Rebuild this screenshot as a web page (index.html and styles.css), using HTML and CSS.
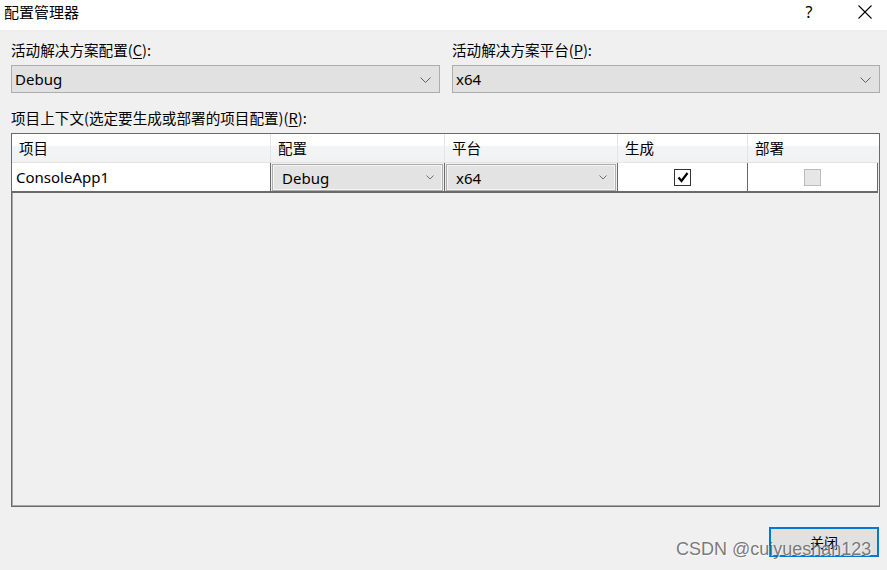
FILE: index.html
```html
<!DOCTYPE html>
<html lang="zh-CN">
<head>
<meta charset="utf-8">
<title>配置管理器</title>
<link rel="stylesheet" href="styles.css">
</head>
<body>
<div class="window">
  <div class="titlebar">
    <span class="title">配置管理器</span>
    <div class="tb-buttons">
      <span class="help">?</span>
      <span class="close">
        <svg width="14" height="14" viewBox="0 0 14 14"><path d="M0.5 0.5 L13.5 13.5 M13.5 0.5 L0.5 13.5" stroke="#000" stroke-width="1.1" fill="none"/></svg>
      </span>
    </div>
  </div>
  <div class="content">
    <div class="top-row">
      <div class="field">
        <div class="label">活动解决方案配置(<u>C</u>):</div>
        <div class="combo">
          <span class="combo-text">Debug</span>
          <svg class="chev" width="11" height="6" viewBox="0 0 11 6"><path d="M0.5 0.5 L5.5 5.5 L10.5 0.5" stroke="#606060" stroke-width="1" fill="none"/></svg>
        </div>
      </div>
      <div class="field">
        <div class="label">活动解决方案平台(<u>P</u>):</div>
        <div class="combo">
          <span class="combo-text">x64</span>
          <svg class="chev" width="11" height="6" viewBox="0 0 11 6"><path d="M0.5 0.5 L5.5 5.5 L10.5 0.5" stroke="#606060" stroke-width="1" fill="none"/></svg>
        </div>
      </div>
    </div>
    <div class="label grid-label">项目上下文(选定要生成或部署的项目配置)(<u>R</u>):</div>
    <div class="grid">
      <div class="grid-head">
        <div class="hcell">项目</div>
        <div class="hcell">配置</div>
        <div class="hcell">平台</div>
        <div class="hcell">生成</div>
        <div class="hcell">部署</div>
      </div>
      <div class="grid-row">
        <div class="cell name">ConsoleApp1</div>
        <div class="cell combo-cell">
          <div class="mini-combo">
            <span>Debug</span>
            <svg class="mini-chev" width="8" height="5" viewBox="0 0 8 5"><path d="M0.5 0.5 L4 4 L7.5 0.5" stroke="#707070" stroke-width="1" fill="none"/></svg>
          </div>
        </div>
        <div class="cell combo-cell">
          <div class="mini-combo">
            <span>x64</span>
            <svg class="mini-chev" width="8" height="5" viewBox="0 0 8 5"><path d="M0.5 0.5 L4 4 L7.5 0.5" stroke="#707070" stroke-width="1" fill="none"/></svg>
          </div>
        </div>
        <div class="cell check-cell">
          <span class="checkbox checked">
            <svg width="12" height="11" viewBox="0 0 12 11"><path d="M1.5 5.5 L4.5 9 L10.5 1" stroke="#000" stroke-width="2.2" fill="none"/></svg>
          </span>
        </div>
        <div class="cell check-cell last">
          <span class="checkbox disabled"></span>
        </div>
      </div>
    </div>
    <div class="footer">
      <button class="btn" type="button">关闭</button>
    </div>
  </div>
  <div class="watermark">CSDN @cuiyueshan123</div>
</div>
</body>
</html>
```

FILE: styles.css
```css
html, body {
  margin: 0;
  padding: 0;
}
body {
  width: 887px;
  height: 570px;
  overflow: hidden;
  font-family: "Noto Sans", "Noto Sans CJK SC", sans-serif;
  color: #000;
  background: #f0f0f0;
}
.window {
  position: relative;
  width: 887px;
  height: 570px;
  background: #f0f0f0;
}
.titlebar {
  height: 30px;
  background: #fff;
  display: flex;
  align-items: center;
  justify-content: space-between;
}
.title {
  padding-left: 4px;
  font-size: 15px;
  line-height: 20px;
  font-family: "Noto Sans CJK SC", sans-serif;
  margin-top: -6px;
}
.tb-buttons {
  display: flex;
  align-items: center;
  height: 30px;
  margin-top: -6px;
}
.help {
  width: 20px;
  text-align: center;
  font-size: 16px;
  line-height: 20px;
  font-family: "Noto Sans", sans-serif;
  margin-right: 39px;
}
.close {
  width: 14px;
  height: 14px;
  display: flex;
  margin-right: 15px;
}
.content {
  padding: 0 7px 0 11px;
  display: flex;
  flex-direction: column;
}
.top-row {
  display: flex;
  gap: 12px;
}
.field {
  display: flex;
  flex-direction: column;
}
.field:first-child { width: 429px; }
.field:last-child { width: 428px; }
.label {
  font-size: 14.6px;
  line-height: 20px;
  height: 20px;
  font-family: "Noto Sans CJK SC", sans-serif;
  margin-top: 10px;
  white-space: nowrap;
}
.label u {
  text-underline-offset: 2px;
}
.combo {
  margin-top: 5px;
  height: 28px;
  box-sizing: border-box;
  border: 1px solid #adadad;
  background: #e1e1e1;
  display: flex;
  align-items: center;
  justify-content: space-between;
  padding: 0 8px 0 3px;
}
.combo-text {
  font-size: 15px;
  line-height: 20px;
}
.chev { display: block; margin-top: 1px; }
.grid-label {
  margin-top: 15px;
}
.grid {
  margin-top: 5px;
  width: 869px;
  height: 374px;
  box-sizing: border-box;
  border: 1px solid #6a6a6a;
  box-shadow: inset 1px -1px 0 #a8a8a8;
  background: #f0f0f0;
}
.grid-head {
  display: grid;
  grid-template-columns: 259px 174px 173px 130px 130px;
  height: 28px;
  background: linear-gradient(#ffffff 0%, #ffffff 40%, #f3f4f6 45%, #f1f2f4 100%);
  border-bottom: 1px solid #e2e2e2;
}
.hcell {
  border-right: 1px solid #e4e4e4;
  padding-left: 7px;
  font-size: 14.5px;
  line-height: 28px;
  font-family: "Noto Sans CJK SC", sans-serif;
}
.hcell:last-child { border-right: none; }
.grid-row {
  display: grid;
  grid-template-columns: 259px 174px 173px 130px 129px;
  width: 866px;
  height: 30px;
  box-sizing: border-box;
  border-bottom: 2px solid #6a6a6a;
  border-right: 2px solid #6a6a6a;
  background: #fff;
}
.cell {
  border-right: 1px solid #6a6a6a;
  display: flex;
  align-items: center;
  font-size: 15px;
}
.cell.last { border-right: none; }
.name {
  padding-left: 4px;
  background: #fff;
}
.combo-cell {
  padding: 1px 1px 0 1px;
  background: #f0f0f0;
  align-items: stretch;
}
.mini-combo {
  flex: 1;
  box-sizing: border-box;
  border: 1px solid #adadad;
  box-shadow: inset 0 0 0 1px #f5f5f5;
  background: #e3e3e3;
  display: flex;
  align-items: center;
  justify-content: space-between;
  padding: 0 8px 0 9px;
  font-size: 15px;
}
.mini-combo span { line-height: 20px; margin-top: 1px; }
.mini-chev { display: block; }
.check-cell {
  justify-content: center;
  background: #fff;
}
.checkbox {
  width: 17px;
  height: 17px;
  box-sizing: border-box;
  display: flex;
  align-items: center;
  justify-content: center;
}
.checkbox.checked {
  border: 1px solid #333;
  background: #fff;
}
.checkbox.disabled {
  border: 1px solid #bcbcbc;
  background: #e6e6e6;
}
.footer {
  display: flex;
  justify-content: flex-end;
  margin-top: 20px;
}
.btn {
  width: 110px;
  height: 30px;
  margin-right: 1px;
  box-sizing: border-box;
  border: 2px solid #0078d7;
  background: #e1e1e1;
  font-family: "Noto Sans CJK SC", sans-serif;
  font-size: 14px;
  color: #000;
  padding: 0;
}
.watermark {
  position: absolute;
  left: 676px;
  top: 538px;
  font-family: "Liberation Sans", Arial, sans-serif;
  font-size: 18px;
  line-height: 22px;
  color: rgba(100, 100, 100, 0.85);
  text-shadow: 1px 1px 0 rgba(255, 255, 255, 0.7);
  white-space: nowrap;
}
```
